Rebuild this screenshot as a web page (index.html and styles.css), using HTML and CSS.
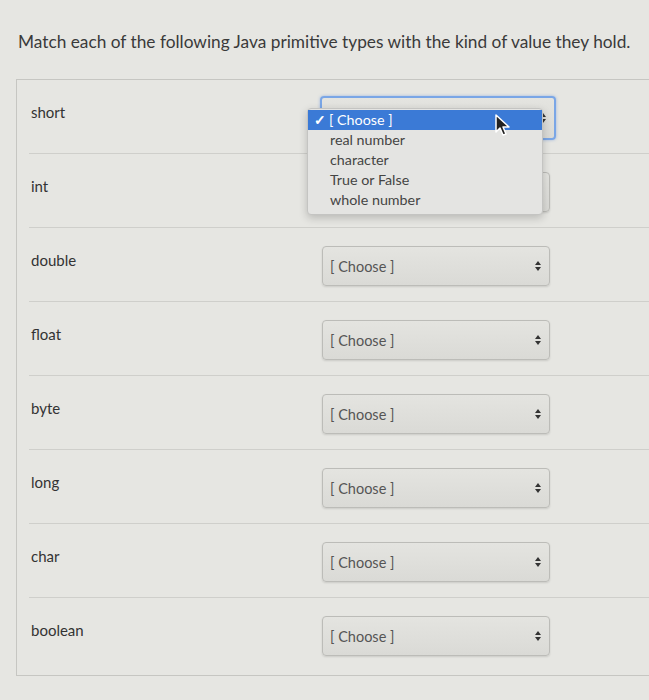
FILE: index.html
```html
<!DOCTYPE html>
<html>
<head>
<meta charset="utf-8">
<link rel="stylesheet" href="styles.css">
</head>
<body>
<p class="title">Match each of the following Java primitive types with the kind of value they hold.</p>
<div class="quiz">
  <div class="row first">
    <div class="label">short</div>
    <div class="select focused"><span class="val"></span><span class="arrows"><i class="up"></i><i class="down"></i></span></div>
    <div class="menu">
      <div class="opt active"><span class="check">✓</span>[ Choose ]</div>
      <div class="opt">real number</div>
      <div class="opt">character</div>
      <div class="opt">True or False</div>
      <div class="opt">whole number</div>
    </div>
    <svg class="cursor" width="18" height="24" viewBox="0 0 18 24"><path d="M2 2 L2 19 L6 15 L9 22 L12 21 L9 14 L15 14 Z" fill="#222" stroke="#fff" stroke-width="1.5" stroke-linejoin="round"/></svg>
  </div>
  <div class="row">
    <div class="label">int</div>
    <div class="select"><span class="val"></span><span class="arrows"><i class="up"></i><i class="down"></i></span></div>
  </div>
  <div class="row">
    <div class="label">double</div>
    <div class="select"><span class="val">[ Choose ]</span><span class="arrows"><i class="up"></i><i class="down"></i></span></div>
  </div>
  <div class="row">
    <div class="label">float</div>
    <div class="select"><span class="val">[ Choose ]</span><span class="arrows"><i class="up"></i><i class="down"></i></span></div>
  </div>
  <div class="row">
    <div class="label">byte</div>
    <div class="select"><span class="val">[ Choose ]</span><span class="arrows"><i class="up"></i><i class="down"></i></span></div>
  </div>
  <div class="row">
    <div class="label">long</div>
    <div class="select"><span class="val">[ Choose ]</span><span class="arrows"><i class="up"></i><i class="down"></i></span></div>
  </div>
  <div class="row">
    <div class="label">char</div>
    <div class="select"><span class="val">[ Choose ]</span><span class="arrows"><i class="up"></i><i class="down"></i></span></div>
  </div>
  <div class="row last">
    <div class="label">boolean</div>
    <div class="select"><span class="val">[ Choose ]</span><span class="arrows"><i class="up"></i><i class="down"></i></span></div>
  </div>
</div>
</body>
</html>
```
FILE: styles.css
```css
html, body {
  margin: 0;
  padding: 0;
  background: #e6e6e2;
  font-family: Lato, "Open Sans", sans-serif;
  color: #333;
  height: 700px;
  overflow: hidden;
}
.title {
  margin: 0;
  padding: 30px 0 0 18px;
  font-size: 17.3px;
  line-height: 24px;
  color: #3a3a3a;
}
.quiz {
  margin: 25px 0 0 16px;
  border-top: 1px solid #c6c6c2;
  border-left: 1px solid #c6c6c2;
  border-bottom: 1px solid #c6c6c2;
}
.row {
  position: relative;
  box-sizing: border-box;
  display: grid;
  grid-template-columns: 293px 228px;
  align-items: start;
  height: 74px;
  margin-left: 12px;
  border-bottom: 1px solid #cfcfcb;
}
.row.last {
  border-bottom: none;
  height: 77px;
}
.label {
  padding: 22px 0 0 2px;
  font-size: 15px;
  line-height: 20px;
  color: #333;
}
.select {
  margin-top: 18px;
  height: 40px;
  box-sizing: border-box;
  border: 1px solid #bcbcb8;
  border-radius: 4px;
  background: linear-gradient(#e4e4e0, #dadad6);
  box-shadow: 0 1px 2px rgba(0,0,0,0.12);
  display: flex;
  align-items: center;
  justify-content: space-between;
  padding: 0 8px 0 7px;
}
.select.focused {
  margin-top: 16px;
  margin-left: -2px;
  width: 236px;
  height: 44px;
  border: 2px solid #7aa6e6;
  box-shadow: 0 0 3px rgba(80,130,220,0.5);
}
.val {
  font-size: 14.5px;
  color: #555;
}
.arrows {
  display: flex;
  flex-direction: column;
  gap: 2px;
}
.arrows i {
  display: block;
  width: 0;
  height: 0;
  border-left: 3px solid transparent;
  border-right: 3px solid transparent;
}
.arrows .up { border-bottom: 4px solid #333; }
.arrows .down { border-top: 4px solid #333; }
.menu {
  position: absolute;
  left: 278px;
  top: 28px;
  width: 234px;
  padding: 1px 0 4px;
  background: #e4e4e2;
  border: 1px solid #c4c4c2;
  border-radius: 4px;
  box-shadow: 0 3px 8px rgba(0,0,0,0.2);
  z-index: 2;
}
.opt {
  font-size: 14.3px;
  line-height: 20px;
  padding-left: 22px;
  color: #444;
}
.opt.active {
  background: #3b7ad6;
  color: #fff;
  padding-left: 6px;
}
.check {
  display: inline-block;
  width: 15px;
  font-weight: bold;
}
.cursor {
  position: absolute;
  left: 465px;
  top: 33px;
  z-index: 3;
}
```
